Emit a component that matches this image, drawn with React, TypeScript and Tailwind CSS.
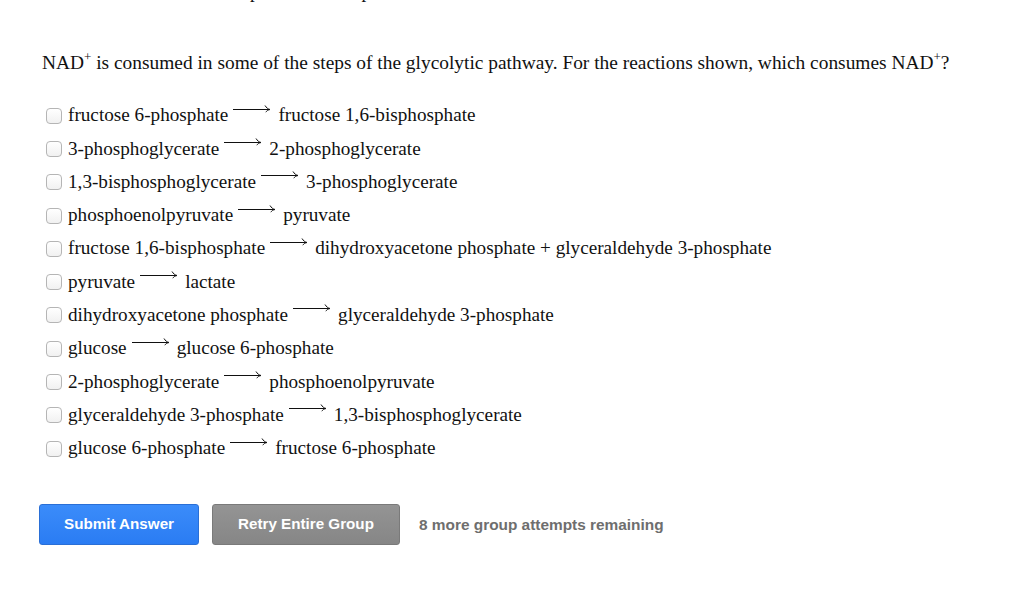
import React from "react";

const REACTIONS: [string, string][] = [
  ["fructose 6-phosphate", "fructose 1,6-bisphosphate"],
  ["3-phosphoglycerate", "2-phosphoglycerate"],
  ["1,3-bisphosphoglycerate", "3-phosphoglycerate"],
  ["phosphoenolpyruvate", "pyruvate"],
  ["fructose 1,6-bisphosphate", "dihydroxyacetone phosphate + glyceraldehyde 3-phosphate"],
  ["pyruvate", "lactate"],
  ["dihydroxyacetone phosphate", "glyceraldehyde 3-phosphate"],
  ["glucose", "glucose 6-phosphate"],
  ["2-phosphoglycerate", "phosphoenolpyruvate"],
  ["glyceraldehyde 3-phosphate", "1,3-bisphosphoglycerate"],
  ["glucose 6-phosphate", "fructose 6-phosphate"],
];

// long reaction arrow, sits raised above the x-height
function Arrow() {
  return (
    <svg width="38" height="10" viewBox="0 0 38 10" className="ml-[5px] mr-[7px] -translate-y-[8px] shrink-0">
      <path d="M0 6.5H36" stroke="#111" strokeWidth="1.1" fill="none" />
      <path d="M32 2.5C33.2 4.6 35 6 37 6.5C35 7 33.6 7.9 32.8 9.2" stroke="#111" strokeWidth="1" fill="none" />
    </svg>
  );
}

function Plus() {
  return <sup className="text-[13px] relative -top-[8px]">+</sup>;
}

export default function App() {
  return (
    <div className="min-h-screen bg-white text-[#111]" style={{ fontFamily: '"Liberation Serif", "Times New Roman", serif' }}>
      {/* tail end of the previous line, scrolled mostly out of view */}
      <div className="h-[4px] overflow-hidden">
        <div className="-mt-[18px] flex text-[19px] leading-[20px]">
          <span className="ml-[250px]">p</span>
          <span className="ml-[102px]">p</span>
        </div>
      </div>

      <div className="pl-[42px] pt-[47px] text-[19.4px] leading-[24px]">
        NAD<Plus /> is consumed in some of the steps of the glycolytic pathway. For the reactions shown, which consumes NAD<Plus />?
      </div>

      <ul className="mt-[24px] pl-[46px]">
        {REACTIONS.map(([from, to]) => (
          <li key={from + to} className="flex items-center h-[33.3px] text-[19.2px]">
            <span className="w-[16px] h-[16px] rounded-[4px] border border-[#b5b5b5] bg-gradient-to-b from-white to-[#f1f1f1] shrink-0 mr-[6px]" />
            <span>{from}</span>
            <Arrow />
            <span>{to}</span>
          </li>
        ))}
      </ul>

      <div className="mt-[39px] pl-[39px] flex items-center" style={{ fontFamily: '"Liberation Sans", Arial, sans-serif' }}>
        <button className="w-[160px] h-[41px] rounded-[3px] border border-[#2a6fd6] bg-gradient-to-b from-[#3b8cfa] to-[#2a7cf3] text-white text-[15.2px] font-bold">
          Submit Answer
        </button>
        <button className="ml-[13px] w-[188px] h-[41px] rounded-[3px] border border-[#7a7a7a] bg-gradient-to-b from-[#949494] to-[#868686] text-white text-[15.2px] font-bold">
          Retry Entire Group
        </button>
        <span className="ml-[19px] text-[15.4px] font-bold text-[#6e6e6e]">8 more group attempts remaining</span>
      </div>
    </div>
  );
}
